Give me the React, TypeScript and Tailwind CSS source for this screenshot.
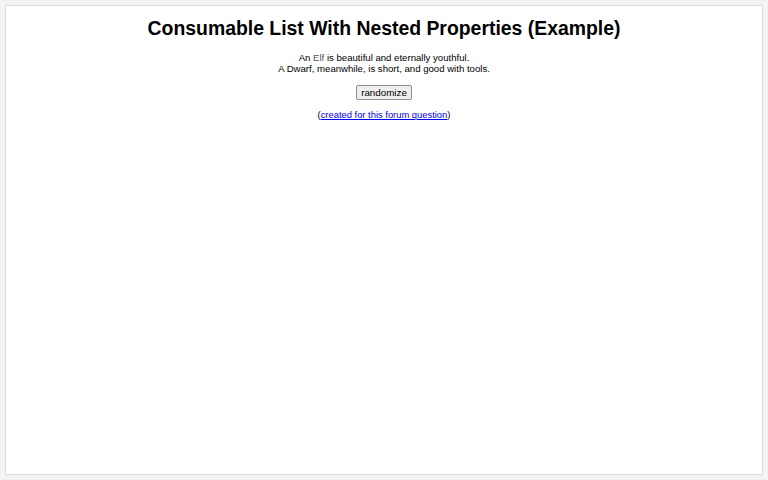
export default function App() {
  return (
    <div className="h-[480px] w-[768px] bg-[#f3f3f3] p-[5px]" style={{ fontFamily: '"Liberation Sans", Arial, sans-serif' }}>
      <div className="flex h-[470px] flex-col items-center border border-[#dcdcdc] bg-white text-black">
        <h1 className="mt-[10px] text-[19.4px] font-bold leading-[24px]">Consumable List With Nested Properties (Example)</h1>
        <div className="mt-[12px] flex flex-col items-center text-[9.6px] leading-[11px]">
          <p>
            An <span className="text-[#555]">Elf</span> is beautiful and eternally youthful.
          </p>
          <p>A Dwarf, meanwhile, is short, and good with tools.</p>
        </div>
        <button className="mt-[11px] flex h-[15px] items-center rounded-[2px] border border-[#8f8f8f] bg-[#efefef] px-[4px] text-[9.8px] leading-[12px]">randomize</button>
        <p className="mt-[9px] text-[9.4px] leading-[11px]">
          (<a href="#" className="text-[#0000ee] underline">created for this forum question</a>)
        </p>
      </div>
    </div>
  );
}
